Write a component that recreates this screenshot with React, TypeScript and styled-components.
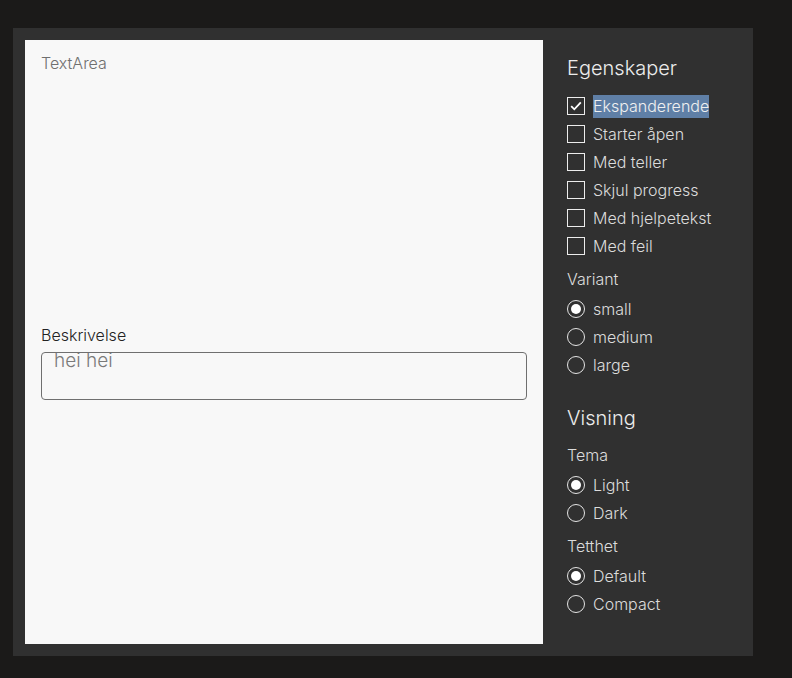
import * as React from "react";
import styled, { createGlobalStyle } from "styled-components";

const GlobalStyle = createGlobalStyle`
  html, body {
    margin: 0;
    padding: 0;
    background: #1b1a19;
    font-family: Inter, "Noto Sans", "Liberation Sans", sans-serif;
  }
`;

const Page = styled.div`
  width: 792px;
  height: 678px;
  padding: 28px 0 0 13px;
  box-sizing: border-box;
`;

const Frame = styled.div`
  width: 740px;
  height: 628px;
  background: #303030;
  padding: 12px 0 12px 12px;
  box-sizing: border-box;
  display: flex;
`;

const Preview = styled.div`
  width: 518px;
  background: #f8f8f8;
  display: flex;
  flex-direction: column;
  padding: 13px 16px 16px 16px;
  box-sizing: border-box;
`;

const PreviewTitle = styled.div`
  font-size: 16px;
  font-weight: 300;
  color: #6f6f6f;
  line-height: 20px;
`;

const PreviewBody = styled.div`
  flex: 1;
  display: flex;
  flex-direction: column;
  justify-content: center;
`;

const Field = styled.div`
  display: flex;
  flex-direction: column;
  gap: 8px;
  margin-top: 24px;
`;

const FieldLabel = styled.label`
  font-size: 16px;
  font-weight: 300;
  color: #222222;
  line-height: 18px;
`;

const Area = styled.textarea`
  width: 486px;
  height: 48px;
  box-sizing: border-box;
  border: 1px solid #6f6f6f;
  border-radius: 4px;
  background: #f8f8f8;
  padding: 0 12px;
  margin: 0;
  font-family: inherit;
  font-size: 19px;
  font-weight: 300;
  line-height: 16px;
  color: #7a7a7a;
  resize: none;
  outline: none;
  overflow: hidden;
`;

const Sidebar = styled.aside`
  flex: 1;
  padding: 14px 0 0 24px;
  color: #dedede;
  display: flex;
  flex-direction: column;
`;

const Heading = styled.h2<{ $top?: number; $bottom?: number }>`
  margin: ${(p) => p.$top ?? 0}px 0 ${(p) => p.$bottom ?? 10}px 0;
  font-size: 20px;
  font-weight: 300;
  line-height: 28px;
  color: #ececec;
`;

const GroupLabel = styled.div`
  font-size: 16px;
  font-weight: 300;
  line-height: 20px;
  margin: 9px 0 6px 0;
  color: #dcdcdc;
`;

const Option = styled.label`
  display: flex;
  align-items: center;
  gap: 8px;
  height: 28px;
  font-size: 16px;
  font-weight: 300;
  color: #dcdcdc;
  cursor: pointer;
`;

const Box = styled.span`
  width: 18px;
  height: 18px;
  box-sizing: border-box;
  border: 1.5px solid #ececec;
  display: flex;
  align-items: center;
  justify-content: center;
`;

const Circle = styled.span<{ $on: boolean }>`
  width: 18px;
  height: 18px;
  box-sizing: border-box;
  border-radius: 50%;
  border: 1.5px solid #e4e4e4;
  display: flex;
  align-items: center;
  justify-content: center;
  &::after {
    content: "";
    width: 10px;
    height: 10px;
    border-radius: 50%;
    background: ${(p) => (p.$on ? "#ffffff" : "transparent")};
  }
`;

const Selected = styled.span`
  display: inline-block;
  background: #5f7fa6;
  color: #f0f0f0;
  line-height: 23px;
`;

const checks = [
  { label: "Ekspanderende", on: true },
  { label: "Starter åpen", on: false },
  { label: "Med teller", on: false },
  { label: "Skjul progress", on: false },
  { label: "Med hjelpetekst", on: false },
  { label: "Med feil", on: false },
];

function Check({ label, on }: { label: string; on: boolean }) {
  return (
    <Option>
      <Box>
        {on && (
          <svg width="12" height="10" viewBox="0 0 12 10">
            <path d="M1.2 5.2 L4.3 8.3 L10.8 1.4" fill="none" stroke="#fff" strokeWidth="1.8" />
          </svg>
        )}
      </Box>
      {on ? <Selected>{label}</Selected> : <span>{label}</span>}
    </Option>
  );
}

function Radio({ label, on }: { label: string; on: boolean }) {
  return (
    <Option>
      <Circle $on={on} />
      <span>{label}</span>
    </Option>
  );
}

export default function App() {
  const [text, setText] = React.useState("hei hei");
  return (
    <Page>
      <GlobalStyle />
      <Frame>
        <Preview>
          <PreviewTitle>TextArea</PreviewTitle>
          <PreviewBody>
            <Field>
              <FieldLabel htmlFor="beskrivelse">Beskrivelse</FieldLabel>
              <Area id="beskrivelse" value={text} onChange={(e) => setText(e.target.value)} />
            </Field>
          </PreviewBody>
        </Preview>
        <Sidebar>
          <Heading>Egenskaper</Heading>
          {checks.map((c) => (
            <Check key={c.label} label={c.label} on={c.on} />
          ))}
          <GroupLabel>Variant</GroupLabel>
          <Radio label="small" on />
          <Radio label="medium" on={false} />
          <Radio label="large" on={false} />
          <Heading $top={25} $bottom={4}>Visning</Heading>
          <GroupLabel>Tema</GroupLabel>
          <Radio label="Light" on />
          <Radio label="Dark" on={false} />
          <GroupLabel>Tetthet</GroupLabel>
          <Radio label="Default" on />
          <Radio label="Compact" on={false} />
        </Sidebar>
      </Frame>
    </Page>
  );
}
